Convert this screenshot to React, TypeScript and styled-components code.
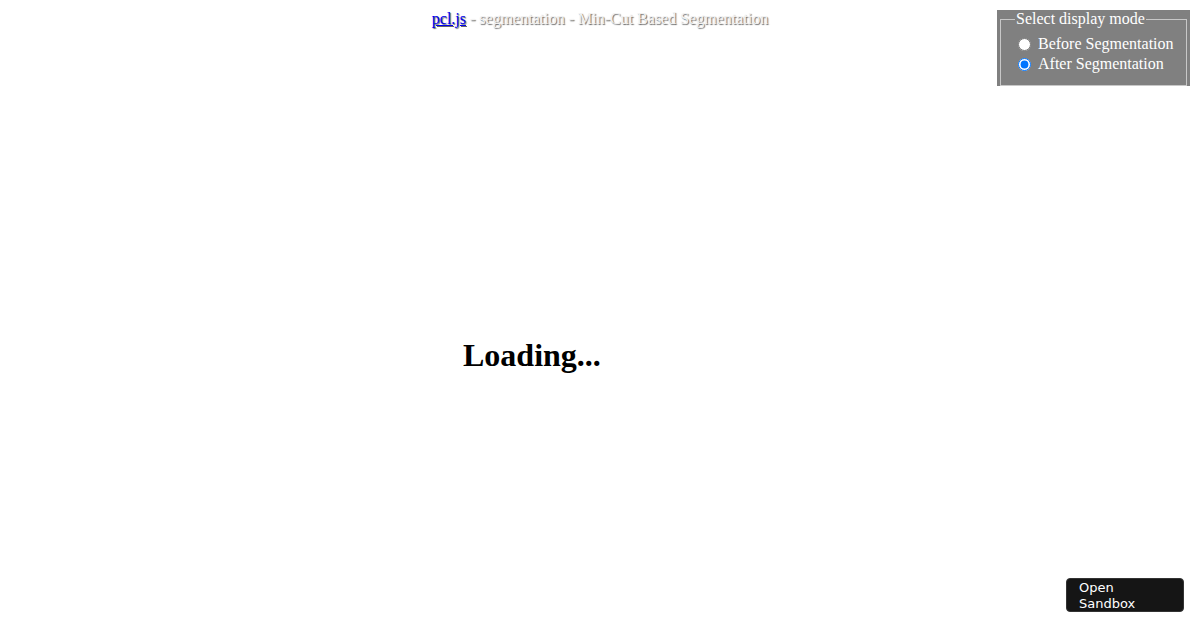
import React from "react";
import styled, { createGlobalStyle } from "styled-components";

const GlobalStyle = createGlobalStyle`
  html, body {
    margin: 0;
    padding: 0;
    background: #ffffff;
    font-family: "Liberation Serif", "Times New Roman", serif;
  }
`;

const Page = styled.div`
  position: relative;
  width: 1200px;
  height: 630px;
  overflow: hidden;
`;

const Info = styled.div`
  position: absolute;
  top: 9px;
  left: 0;
  width: 100%;
  text-align: center;
  font-size: 16px;
  line-height: 20px;
  color: #f2f2f2;
  text-shadow: 1px 1px 1px #666;
  a {
    color: #0000ee;
    text-decoration: underline;
  }
`;

const Panel = styled.div`
  position: absolute;
  top: 10px;
  right: 10px;
  width: 193px;
  height: 76px;
  background: #808080;
  box-sizing: border-box;
  padding: 0 1px;
  overflow: hidden;
`;

const Fieldset = styled.fieldset`
  margin: 0 2px;
  padding: 6px 12px 0 14px;
  height: 76px;
  box-sizing: border-box;
  border: 1px solid #c8c8c8;
  color: #ffffff;
  font-size: 16px;
  legend {
    padding: 0 1px;
    line-height: 18px;
  }
`;

const Option = styled.label`
  display: flex;
  align-items: center;
  height: 20px;
  line-height: 20px;
  white-space: nowrap;
  input {
    margin: 0 7px 0 3px;
    width: 13px;
    height: 13px;
  }
`;

const Loading = styled.h1`
  position: absolute;
  top: 335px;
  left: 463px;
  margin: 0;
  font-size: 32px;
  line-height: 40px;
  font-weight: bold;
  color: #000;
`;

const SandboxButton = styled.button`
  position: absolute;
  right: 16px;
  bottom: 18px;
  width: 118px;
  height: 34px;
  padding: 1px 12px 0;
  text-align: left;
  background: #151515;
  color: #ffffff;
  border: 1px solid #333;
  border-radius: 4px;
  font-family: "DejaVu Sans", Verdana, sans-serif;
  font-size: 13px;
  line-height: 16px;
`;

export default function App() {
  const [mode, setMode] = React.useState("after");
  return (
    <Page>
      <GlobalStyle />
      <Info>
        <a href="#">pcl.js</a> - segmentation - Min-Cut Based Segmentation
      </Info>
      <Panel>
        <Fieldset>
          <legend>Select display mode</legend>
          <Option>
            <input
              type="radio"
              name="mode"
              checked={mode === "before"}
              onChange={() => setMode("before")}
            />
            Before Segmentation
          </Option>
          <Option>
            <input
              type="radio"
              name="mode"
              checked={mode === "after"}
              onChange={() => setMode("after")}
            />
            After Segmentation
          </Option>
        </Fieldset>
      </Panel>
      <Loading>Loading...</Loading>
      <SandboxButton>
        Open
        <br />
        Sandbox
      </SandboxButton>
    </Page>
  );
}
